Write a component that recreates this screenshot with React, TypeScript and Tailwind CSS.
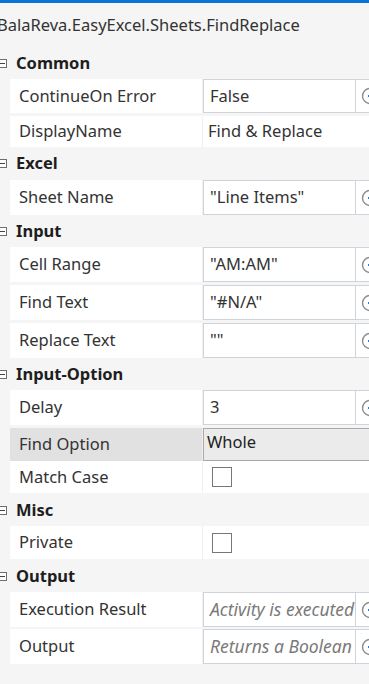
import React from "react";

const font = { fontFamily: '"Noto Sans", "Open Sans", sans-serif' };

function Icon() {
  return (
    <svg width="20" height="20" viewBox="0 0 20 20" className="ml-[4px] shrink-0">
      <circle cx="10" cy="10" r="7.5" fill="white" stroke="#8c8c8c" strokeWidth="1.4" />
      <line x1="8" y1="10" x2="13" y2="10" stroke="#2f7ad1" strokeWidth="1.8" />
    </svg>
  );
}

function Header({ title }: { title: string }) {
  return (
    <div className="h-[32px] flex items-center">
      <div className="w-[9px] h-[9px] border border-[#6e6e6e] ml-[-2px] flex items-center justify-center bg-white">
        <div className="w-[5px] h-px bg-[#444]" />
      </div>
      <span className="ml-[9px] font-bold text-[16.5px] text-[#1e1e1e]">{title}</span>
    </div>
  );
}

type Kind = "box" | "plain" | "check" | "combo" | "ph";

function Row({
  label,
  value,
  kind,
  h,
  mt = 0,
  sel = false,
}: {
  label: string;
  value?: string;
  kind: Kind;
  h: number;
  mt?: number;
  sel?: boolean;
}) {
  return (
    <div className="flex pl-[10px]" style={{ height: h, marginTop: mt }}>
      <div
        className={
          "w-[192px] shrink-0 flex items-center pl-[9px] text-[16.5px] text-[#333] whitespace-nowrap " +
          (sel ? "bg-[#e1e1e1]" : "bg-white")
        }
      >
        {label}
      </div>
      <div className="flex-1 flex border-l border-[#f0f0f0] bg-white">
        {kind === "box" && (
          <>
            <div className="w-[153px] shrink-0 h-full border border-[#cdd4db] flex items-center pl-[6px] text-[16.5px] text-[#333] overflow-hidden whitespace-nowrap">
              {value}
            </div>
            <div className="w-[24px] h-full border border-l-0 border-[#cdd4db] flex items-center shrink-0">
              <Icon />
            </div>
          </>
        )}
        {kind === "ph" && (
          <>
            <div className="w-[153px] shrink-0 h-full border border-[#cdd4db] flex items-center pl-[6px] text-[17.5px] italic text-[#7a7a7a] overflow-hidden whitespace-nowrap">
              {value}
            </div>
            <div className="w-[24px] h-full border border-l-0 border-[#cdd4db] flex items-center shrink-0">
              <Icon />
            </div>
          </>
        )}
        {kind === "plain" && (
          <div className="flex items-center pl-[5px] text-[16.5px] text-[#333] whitespace-nowrap">{value}</div>
        )}
        {kind === "check" && (
          <div className="flex items-center pl-[9px]">
            <div className="w-[20px] h-[20px] border border-[#777] bg-white" />
          </div>
        )}
        {kind === "combo" && (
          <div className="flex-1 h-full border border-[#a9a9a9] bg-[#ebebeb] flex items-start pt-[1px] pl-[3px] text-[16.5px] text-[#222] mr-[-4px]">
            {value}
          </div>
        )}
      </div>
    </div>
  );
}

export default function App() {
  return (
    <div className="w-[369px] h-[684px] overflow-hidden bg-[#f5f5f5]" style={font}>
      <div className="h-[3px] bg-[#0a74d6]" />
      <div className="h-[44px] flex items-center ml-[-3px] text-[16.5px] text-[#333] whitespace-nowrap">
        BalaReva.EasyExcel.Sheets.FindReplace
      </div>
      <Header title="Common" />
      <Row label="ContinueOn Error" value="False" kind="box" h={34} />
      <Row label="DisplayName" value="Find & Replace" kind="plain" h={31} mt={3} />
      <Header title="Excel" />
      <Row label="Sheet Name" value={'"Line Items"'} kind="box" h={35} mt={1} />
      <Header title="Input" />
      <Row label="Cell Range" value={'"AM:AM"'} kind="box" h={35} />
      <Row label="Find Text" value={'"#N/A"'} kind="box" h={35} mt={3} />
      <Row label="Replace Text" value={'""'} kind="box" h={35} mt={3} />
      <Header title="Input-Option" />
      <Row label="Delay" value="3" kind="box" h={35} />
      <Row label="Find Option" value="Whole" kind="combo" h={33} mt={3} sel />
      <Row label="Match Case" kind="check" h={32} />
      <div className="h-[1px]" />
      <Header title="Misc" />
      <Row label="Private" kind="check" h={33} />
      <div className="h-[1px]" />
      <Header title="Output" />
      <Row label="Execution Result" value="Activity is executed" kind="ph" h={35} />
      <Row label="Output" value="Returns a Boolean" kind="ph" h={35} mt={2} />
    </div>
  );
}
